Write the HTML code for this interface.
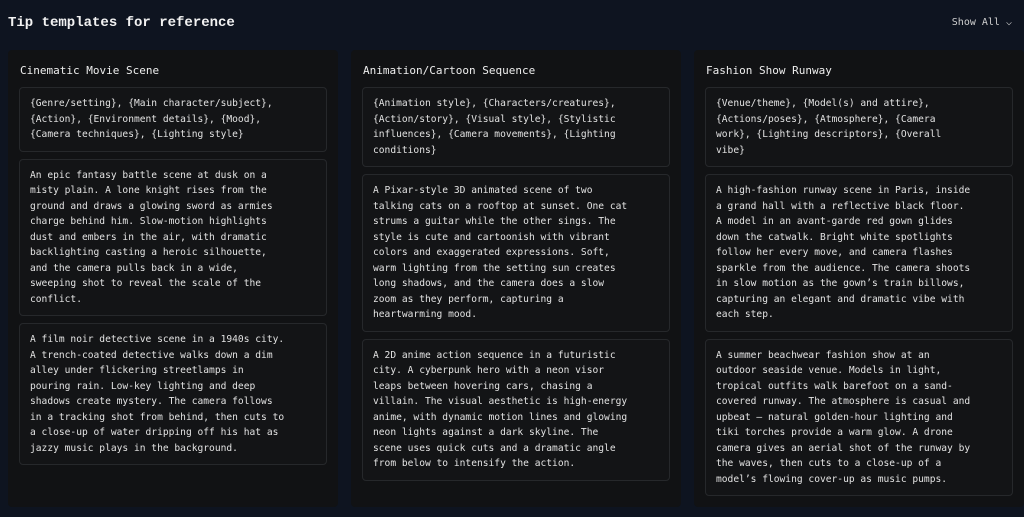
<!DOCTYPE html>
<html><head><meta charset="utf-8"><style>
*{box-sizing:border-box;margin:0;padding:0}
body{width:1024px;height:517px;overflow:hidden;background:#0e1420;font-family:"DejaVu Sans Mono","Liberation Mono",monospace;color:#e6e6e6}
h1{position:absolute;left:8px;top:15px;font-size:14px;font-weight:bold;font-family:"Liberation Mono",monospace;color:#f2f2f2}
.show{position:absolute;right:12px;top:17px;font-size:10px;color:#d0d0d0}
.card{position:absolute;top:50px;width:330px;height:457px;background:#111214;border-radius:4px;padding:0 11px}
.card h2{font-size:11px;font-weight:normal;margin:14px 0 0 1px;height:23px;color:#eee}
.box{border:1px solid #26282b;border-radius:4px;background:#131416;padding:8px 9px 8px 10px;font-size:9.6px;line-height:15.5px;margin-bottom:7px;color:#e3e3e3;white-space:pre}
</style></head><body>
<h1>Tip templates for reference</h1>
<div class="show">Show All ⌵</div>
<div class="card" style="left:8px">
<h2>Cinematic Movie Scene</h2>
<div class="box">{Genre/setting}, {Main character/subject},
{Action}, {Environment details}, {Mood},
{Camera techniques}, {Lighting style}</div>
<div class="box">An epic fantasy battle scene at dusk on a
misty plain. A lone knight rises from the
ground and draws a glowing sword as armies
charge behind him. Slow-motion highlights
dust and embers in the air, with dramatic
backlighting casting a heroic silhouette,
and the camera pulls back in a wide,
sweeping shot to reveal the scale of the
conflict.</div>
<div class="box">A film noir detective scene in a 1940s city.
A trench-coated detective walks down a dim
alley under flickering streetlamps in
pouring rain. Low-key lighting and deep
shadows create mystery. The camera follows
in a tracking shot from behind, then cuts to
a close-up of water dripping off his hat as
jazzy music plays in the background.</div>
</div>
<div class="card" style="left:351px">
<h2>Animation/Cartoon Sequence</h2>
<div class="box">{Animation style}, {Characters/creatures},
{Action/story}, {Visual style}, {Stylistic
influences}, {Camera movements}, {Lighting
conditions}</div>
<div class="box">A Pixar-style 3D animated scene of two
talking cats on a rooftop at sunset. One cat
strums a guitar while the other sings. The
style is cute and cartoonish with vibrant
colors and exaggerated expressions. Soft,
warm lighting from the setting sun creates
long shadows, and the camera does a slow
zoom as they perform, capturing a
heartwarming mood.</div>
<div class="box">A 2D anime action sequence in a futuristic
city. A cyberpunk hero with a neon visor
leaps between hovering cars, chasing a
villain. The visual aesthetic is high-energy
anime, with dynamic motion lines and glowing
neon lights against a dark skyline. The
scene uses quick cuts and a dramatic angle
from below to intensify the action.</div>
</div>
<div class="card" style="left:694px">
<h2>Fashion Show Runway</h2>
<div class="box">{Venue/theme}, {Model(s) and attire},
{Actions/poses}, {Atmosphere}, {Camera
work}, {Lighting descriptors}, {Overall
vibe}</div>
<div class="box">A high-fashion runway scene in Paris, inside
a grand hall with a reflective black floor.
A model in an avant-garde red gown glides
down the catwalk. Bright white spotlights
follow her every move, and camera flashes
sparkle from the audience. The camera shoots
in slow motion as the gown’s train billows,
capturing an elegant and dramatic vibe with
each step.</div>
<div class="box">A summer beachwear fashion show at an
outdoor seaside venue. Models in light,
tropical outfits walk barefoot on a sand-
covered runway. The atmosphere is casual and
upbeat – natural golden-hour lighting and
tiki torches provide a warm glow. A drone
camera gives an aerial shot of the runway by
the waves, then cuts to a close-up of a
model’s flowing cover-up as music pumps.</div>
</div>
</body></html>
